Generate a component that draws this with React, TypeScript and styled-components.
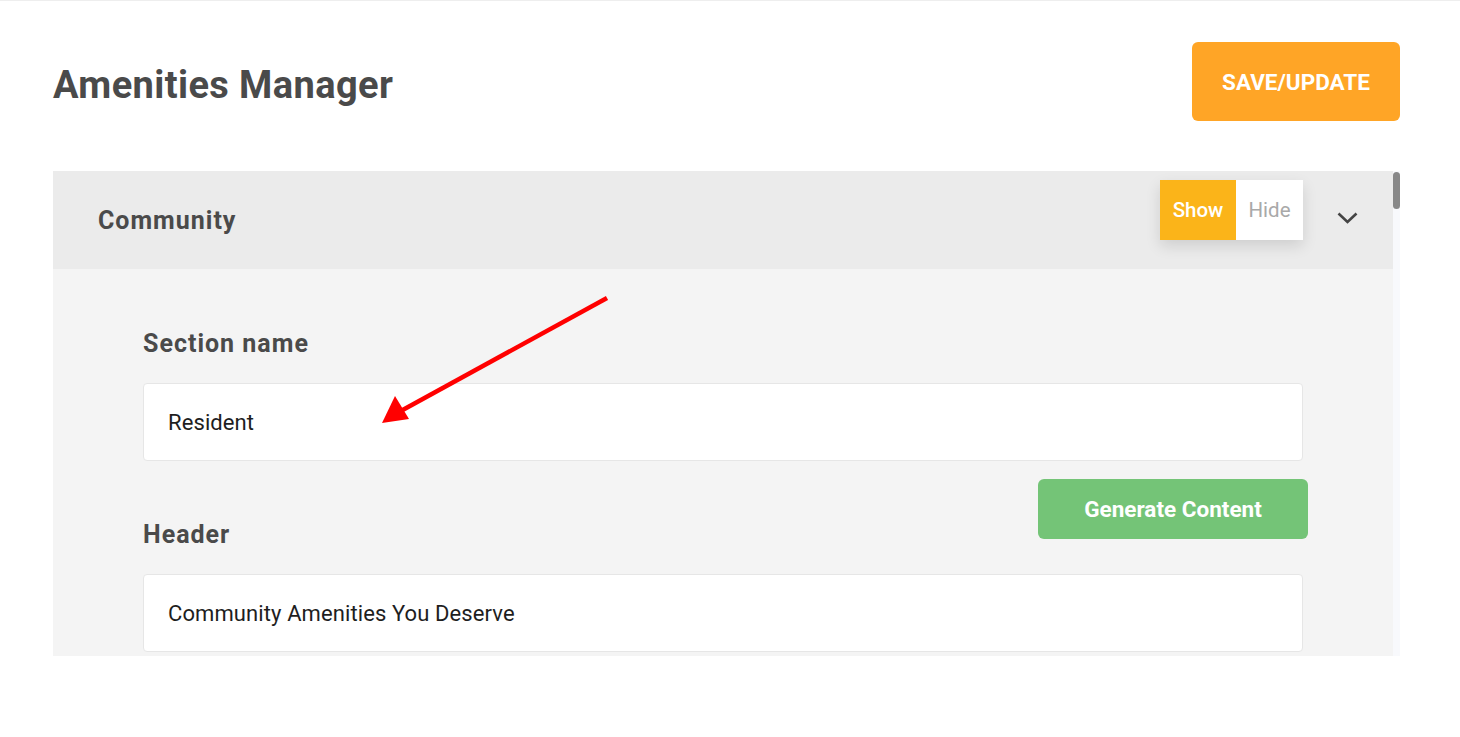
import styled, { createGlobalStyle } from "styled-components";

const GlobalStyle = createGlobalStyle`
    html, body {
        margin: 0;
        padding: 0;
        background: #ffffff;
        font-family: Roboto, "Noto Sans", sans-serif;
    }
    * {
        box-sizing: border-box;
    }
`;

export default function App() {
    return (
        <>
            <GlobalStyle />
            <Page>
                <TopRow>
                    <Title>Amenities Manager</Title>
                    <SaveButton>SAVE/UPDATE</SaveButton>
                </TopRow>

                <Panel>
                    <PanelContent>
                        <SectionHead>
                            <SectionTitle>Community</SectionTitle>
                            <HeadControls>
                                <Toggle>
                                    <ToggleOption $active>Show</ToggleOption>
                                    <ToggleOption>Hide</ToggleOption>
                                </Toggle>
                                <Chevron viewBox="0 0 21 12">
                                    <path
                                        d="M1.5 1.5 L10.5 10 L19.5 1.5"
                                        fill="none"
                                        stroke="#444444"
                                        strokeWidth="2.6"
                                    />
                                </Chevron>
                            </HeadControls>
                        </SectionHead>

                        <SectionBody>
                            <Label>Section name</Label>
                            <Field>Resident</Field>

                            <LabelRow>
                                <Label $offset>Header</Label>
                                <GenerateButton>Generate Content</GenerateButton>
                            </LabelRow>
                            <Field>Community Amenities You Deserve</Field>
                        </SectionBody>
                    </PanelContent>
                    <ScrollTrack>
                        <ScrollThumb />
                    </ScrollTrack>
                </Panel>

                <Annotation viewBox="0 0 240 140">
                    <line
                        x1="232"
                        y1="5"
                        x2="24"
                        y2="119"
                        stroke="#ff0000"
                        strokeWidth="4.5"
                    />
                    <polygon points="7,130 20,103 34,126" fill="#ff0000" />
                </Annotation>
            </Page>
        </>
    );
}

const Page = styled.div`
    position: relative;
    height: 737px;
    padding: 42px 60px 0 53px;
    border-top: 1px solid #eeeeee;
    overflow: hidden;
`;

const TopRow = styled.div`
    display: flex;
    align-items: center;
    justify-content: space-between;
    margin-top: -1px;
`;

const Title = styled.h1`
    margin: 6px 0 0;
    font-size: 38px;
    font-weight: 700;
    letter-spacing: 0.4px;
    color: #4a4a4a;
`;

const SaveButton = styled.button`
    width: 208px;
    height: 79px;
    border: none;
    border-radius: 6px;
    background: #ffa526;
    color: #ffffff;
    font-family: inherit;
    font-size: 22.5px;
    font-weight: 700;
    cursor: pointer;
`;

const Panel = styled.div`
    display: flex;
    margin-top: 50px;
    height: 485px;
    overflow: hidden;
`;

const PanelContent = styled.div`
    flex: 1;
    background: #f4f4f4;
`;

const ScrollTrack = styled.div`
    width: 7px;
    background: #f8f9fc;
`;

const ScrollThumb = styled.div`
    height: 37px;
    margin-top: 1px;
    border-radius: 4px;
    background: #888888;
`;

const SectionHead = styled.div`
    display: flex;
    justify-content: space-between;
    align-items: center;
    height: 98px;
    padding: 0 35px 0 45px;
    background: #ebebeb;
`;

const SectionTitle = styled.h2`
    margin: 0;
    font-size: 25px;
    font-weight: 700;
    letter-spacing: 1px;
    color: #4a4a4a;
`;

const HeadControls = styled.div`
    display: flex;
    align-items: flex-start;
    align-self: stretch;
    gap: 34px;
`;

const Toggle = styled.div`
    display: flex;
    height: 60px;
    margin-top: 9px;
    box-shadow: 0 6px 14px rgba(0, 0, 0, 0.12);
`;

const ToggleOption = styled.div<{ $active?: boolean }>`
    display: flex;
    align-items: center;
    justify-content: center;
    width: ${({ $active }) => ($active ? "76px" : "67px")};
    background: ${({ $active }) => ($active ? "#fbb419" : "#ffffff")};
    color: ${({ $active }) => ($active ? "#ffffff" : "#a9a9a9")};
    font-size: 20.5px;
    font-weight: ${({ $active }) => ($active ? 500 : 400)};
`;

const Chevron = styled.svg`
    width: 21px;
    height: 12px;
    margin-top: 41px;
`;

const SectionBody = styled.div`
    padding: 60px 90px 0 90px;
`;

const Label = styled.div<{ $offset?: boolean }>`
    margin-top: ${({ $offset }) => ($offset ? "41px" : "0")};
    font-size: 25px;
    line-height: 30px;
    font-weight: 700;
    letter-spacing: 1px;
    color: #4a4a4a;
`;

const LabelRow = styled.div`
    display: flex;
    justify-content: space-between;
    align-items: flex-start;
    margin-top: 18px;
    margin-right: -5px;
`;

const Field = styled.div`
    display: flex;
    align-items: center;
    height: 78px;
    margin-top: 24px;
    padding-left: 24px;
    background: #ffffff;
    border: 1px solid #e6e6e6;
    border-radius: 4px;
    font-size: 22px;
    letter-spacing: 0.1px;
    color: #1e1e1e;
`;

const GenerateButton = styled.button`
    width: 270px;
    height: 60px;
    border: none;
    border-radius: 6px;
    background: #74c477;
    color: #ffffff;
    font-family: inherit;
    font-size: 22.5px;
    font-weight: 700;
    cursor: pointer;
`;

const Annotation = styled.svg`
    position: absolute;
    left: 375px;
    top: 292px;
    width: 240px;
    height: 140px;
    pointer-events: none;
`;
